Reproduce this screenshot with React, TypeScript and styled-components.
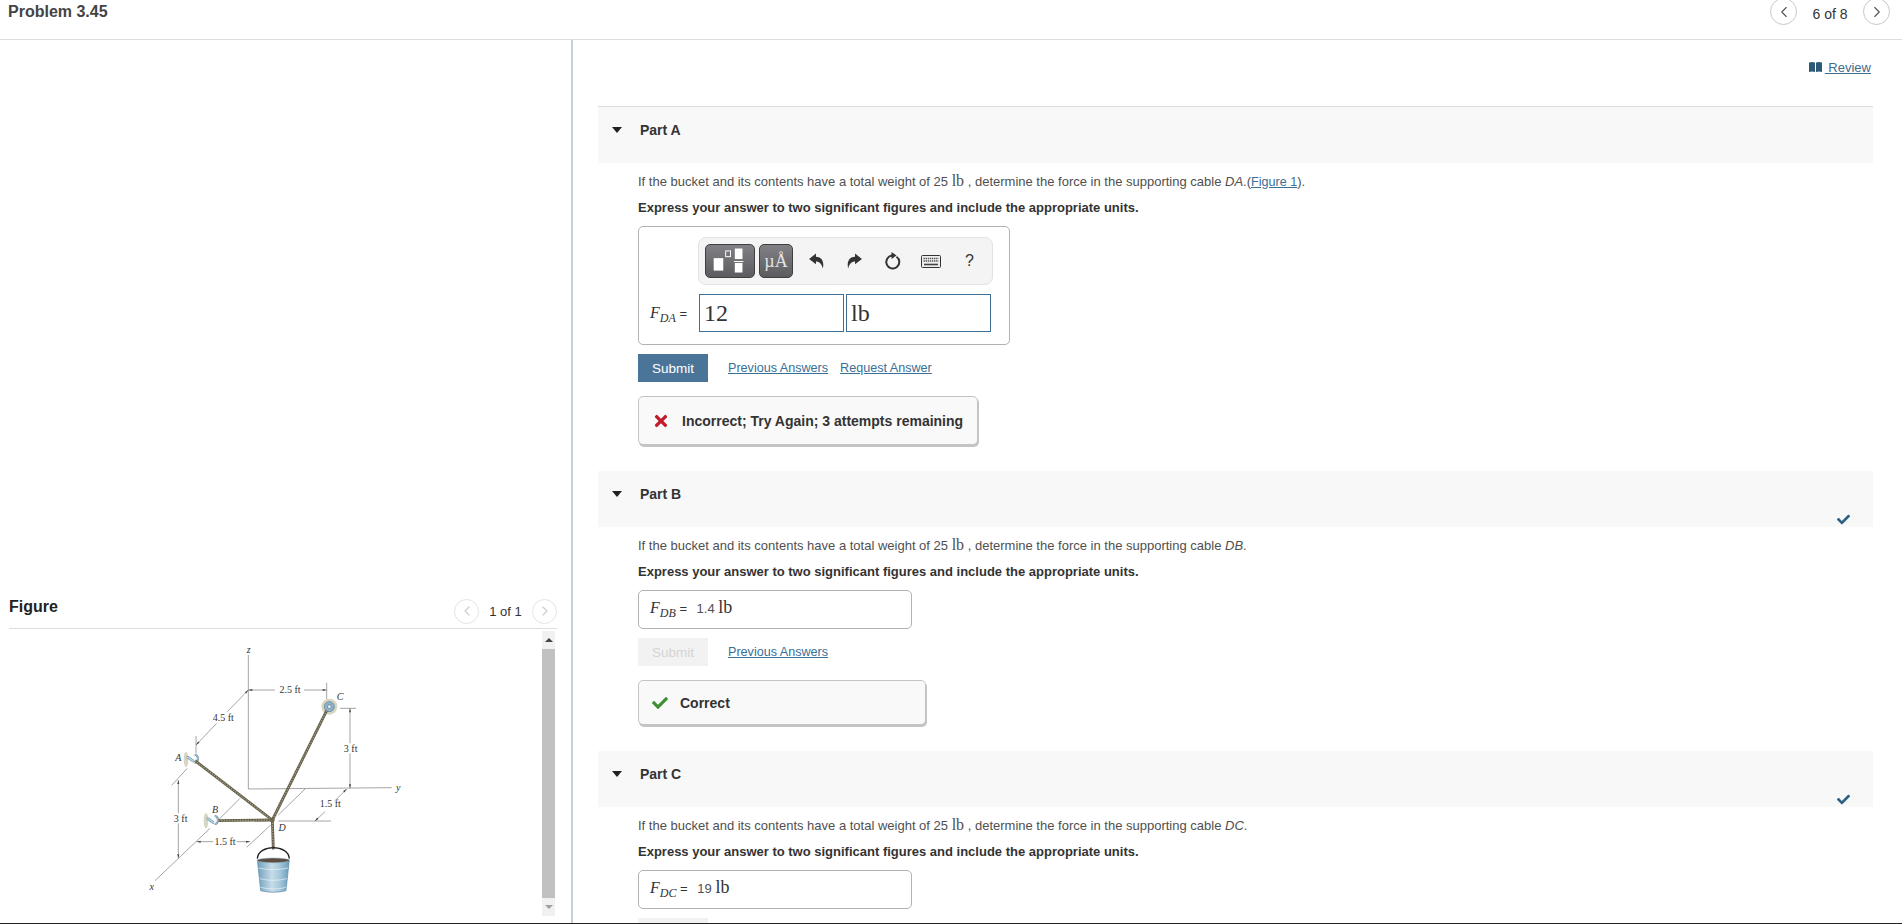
import { ChevronLeft, ChevronRight } from 'lucide-react'
import { FaCheck, FaTimes } from 'react-icons/fa'
import styled, { createGlobalStyle } from 'styled-components'

const GlobalStyle = createGlobalStyle`
  html, body {
    margin: 0;
    padding: 0;
    background: #fff;
    overflow: hidden;
  }
  * {
    box-sizing: border-box;
  }
  body {
    font-family: "Liberation Sans", Arial, sans-serif;
    color: #333;
  }
`

const Rope = ({ d }: { d: string }) => (
  <g fill='none'>
    <path d={d} stroke='#645f4a' strokeWidth='8.5' />
    <path d={d} stroke='#aaa38a' strokeWidth='3.5' strokeDasharray='4 4' />
  </g>
)

const dimLines = [
  'M295 45V447',
  'M295 447L725 443',
  'M15 722L180 565M205 540L270 475',
  'M295 150H375M462 150H530',
  'M530 128V178',
  'M295 150L232 215M200 250L138 315',
  'M138 288V340',
  'M570 205H618',
  'M600 205V310M600 340V445',
  'M590 447L555 482M525 515L495 543',
  'M385 543H543',
  'M465 447L385 525',
  'M65 436L112 385',
  'M85 420V520M85 550V655',
  'M140 605H190M260 605H300',
  'M290 622L362 555'
]

const arrows = [
  [295, 150, 0],
  [530, 150, 180],
  [295, 150, 134],
  [138, 315, -46],
  [600, 205, 90],
  [600, 445, -90],
  [590, 447, 135],
  [495, 543, -45],
  [85, 420, 90],
  [85, 655, -90],
  [140, 605, 0],
  [300, 605, 180]
]

const figureLabels = [
  { x: 296, y: 38, text: 'z', italic: true },
  { x: 745, y: 452, text: 'y', italic: true },
  { x: 5, y: 750, text: 'x', italic: true },
  { x: 420, y: 160, text: '2.5 ft' },
  { x: 220, y: 242, text: '4.5 ft' },
  { x: 602, y: 335, text: '3 ft' },
  { x: 541, y: 502, text: '1.5 ft' },
  { x: 92, y: 545, text: '3 ft' },
  { x: 225, y: 614, text: '1.5 ft' },
  { x: 85, y: 362, text: 'A', italic: true },
  { x: 195, y: 518, text: 'B', italic: true },
  { x: 570, y: 180, text: 'C', italic: true },
  { x: 396, y: 573, text: 'D', italic: true }
]

const Hook = ({ x, y }: { x: number; y: number }) => {
  const arm = `M${x + 2} ${y - 6}C${x + 14} ${y - 6} ${x + 14} ${y + 4} ${x + 24} ${y + 6}`
  const loop = `M${x + 26} ${y - 14}C${x + 40} ${y - 12} ${x + 38} ${y + 10} ${x + 26} ${y + 10}`
  return (
    <g fill='none'>
      <ellipse cx={x} cy={y} rx='7' ry='23' fill='#d8d5c2' />
      <path d={arm} stroke='#5f8aa5' strokeWidth='8' />
      <path d={arm} stroke='#b4d0df' strokeWidth='5' />
      <path d={loop} stroke='#5f8aa5' strokeWidth='6' />
      <path d={loop} stroke='#b4d0df' strokeWidth='3' />
    </g>
  )
}

const BucketFigure = () => (
  <FigureSvg viewBox='0 0 840 795'>
    <defs>
      <linearGradient id='bucketBody' x1='0' x2='1' y1='0' y2='0'>
        <stop offset='0' stopColor='#6f9fbc' />
        <stop offset='0.45' stopColor='#c6dce8' />
        <stop offset='0.7' stopColor='#a6c8da' />
        <stop offset='1' stopColor='#6a9cba' />
      </linearGradient>
    </defs>
    <g fill='none' stroke='#777' strokeWidth='2'>
      {dimLines.map((d) => (
        <path d={d} key={d} />
      ))}
    </g>
    {arrows.map(([x, y, angle]) => (
      <path
        d='M0 0L12 -3V3Z'
        fill='#444'
        transform={`translate(${x} ${y}) rotate(${angle})`}
        key={`${x}-${y}-${angle}`}
      />
    ))}
    <circle cx='538' cy='200' r='24' fill='#d8d5c2' />
    <circle cx='538' cy='200' r='15' fill='#8fb4cc' stroke='#4d7690' strokeWidth='2' />
    <circle cx='538' cy='200' r='6' fill='#dfe9ef' stroke='#4d7690' strokeWidth='2' />
    <Hook x={108} y={358} />
    <Hook x={168} y={542} />
    <Rope d='M135 362L367 540' />
    <Rope d='M530 212L367 540' />
    <Rope d='M205 542L367 540' />
    <Rope d='M367 540L370 628' />
    <circle cx='367' cy='540' r='7' fill='#6b654e' />
    <path d='M322 656C325 612 415 612 418 656' fill='none' stroke='#222' strokeWidth='4' />
    <path d='M322 660L332 752Q370 762 408 752L418 660Z' fill='url(#bucketBody)' stroke='#5f8aa5' strokeWidth='2' />
    <path d='M326 684Q370 694 414 684M329 716Q370 726 411 716M331 742Q370 752 409 742' fill='none' stroke='#eaf3f7' strokeWidth='2' />
    <ellipse cx='370' cy='661' rx='48' ry='7' fill='#5c4d40' stroke='#8fb0c4' strokeWidth='1.5' />
    {figureLabels.map((label) => (
      <FigureLabel x={label.x} y={label.y} $italic={label.italic} key={label.text + label.x}>
        {label.text}
      </FigureLabel>
    ))}
  </FigureSvg>
)

const TemplateIcon = () => (
  <svg width='50' height='34' viewBox='0 0 50 34'>
    <rect x='8' y='14' width='10' height='13' fill='#fff' />
    <rect x='20.5' y='6.5' width='5' height='6' fill='none' stroke='#fff' />
    <rect x='30' y='4' width='8' height='11' fill='#fff' />
    <rect x='29' y='17' width='10' height='1' fill='#fff' />
    <rect x='30' y='19' width='8' height='10' fill='#fff' />
  </svg>
)

const ArrowIcon = ({ flip }: { flip?: boolean }) => (
  <svg width='17' height='18' viewBox='0 0 16 16'>
    <path
      d='M1 6L7.5 1V4C12.5 4 15.5 8 14 15C13 11 10.5 8.5 7.5 8.5V11Z'
      fill='#333'
      transform={flip ? 'matrix(-1 0 0 1 16 0)' : undefined}
    />
  </svg>
)

const ResetIcon = () => (
  <svg width='18' height='20' viewBox='0 0 18 20'>
    <path d='M12.5 5.7A6.5 6.5 0 1 1 8 4.6' fill='none' stroke='#333' strokeWidth='2' />
    <path d='M7.5 1L12.5 4.5L7.5 8Z' fill='#333' />
  </svg>
)

const KeyboardIcon = () => (
  <svg width='20' height='13' viewBox='0 0 20 13'>
    <rect x='0.5' y='0.5' width='19' height='12' rx='1' fill='#eee' stroke='#333' />
    <path d='M2.5 3.5H17.5M2.5 6H17.5' stroke='#555' strokeWidth='1.4' strokeDasharray='1.4 0.7' />
    <path d='M3 9.5H17' stroke='#444' strokeWidth='1.6' />
  </svg>
)

const BookIcon = () => (
  <svg width='13' height='10' viewBox='0 0 13 10'>
    <path d='M0 0.5Q3 -0.3 6 0.5V10Q3 9.2 0 10ZM7 0.5Q10 -0.3 13 0.5V10Q10 9.2 7 10Z' fill='#2d5876' />
  </svg>
)

const Symbol = ({ letter, sub }: { letter: string; sub: string }) => (
  <MathSymbol>
    {letter}
    <sub>{sub}</sub>
  </MathSymbol>
)

type PartProps = {
  name: string
  cable: string
  first?: boolean
  done?: boolean
  link?: boolean
  children: React.ReactNode
}

const Part = ({ name, cable, first, done, link, children }: PartProps) => (
  <PartWrapper>
    <PartHeader $first={first}>
      <PartTitle>
        <Caret />
        {name}
      </PartTitle>
      {done && (
        <DoneMark>
          <FaCheck size={13} />
        </DoneMark>
      )}
    </PartHeader>
    <PartBody>
      <Prompt>
        If the bucket and its contents have a total weight of 25 <Unit>lb</Unit> , determine the force in the
        supporting cable <em>{cable}</em>.
        {link && (
          <>
            (<TextLink>Figure 1</TextLink>).
          </>
        )}
      </Prompt>
      <Instruction>Express your answer to two significant figures and include the appropriate units.</Instruction>
      {children}
    </PartBody>
  </PartWrapper>
)

const App = () => {
  return (
    <Page>
      <GlobalStyle />
      <TopBar>
        <ProblemTitle>Problem 3.45</ProblemTitle>
        <Pager>
          <RoundButton $size={27}>
            <ChevronLeft size={18} strokeWidth={1.5} />
          </RoundButton>
          <PagerText>6 of 8</PagerText>
          <RoundButton $size={27}>
            <ChevronRight size={18} strokeWidth={1.5} />
          </RoundButton>
        </Pager>
      </TopBar>
      <Columns>
        <LeftPane>
          <FigureHeader>
            <FigureTitle>Figure</FigureTitle>
            <FigurePager>
              <RoundButton $size={25} $faded>
                <ChevronLeft size={16} strokeWidth={2} />
              </RoundButton>
              <FigureCount>1 of 1</FigureCount>
              <RoundButton $size={25} $faded>
                <ChevronRight size={16} strokeWidth={2} />
              </RoundButton>
            </FigurePager>
          </FigureHeader>
          <FigureBody>
            <BucketFigure />
            <ScrollBar>
              <ScrollArrow $up />
              <ScrollThumb />
              <ScrollArrow />
            </ScrollBar>
          </FigureBody>
        </LeftPane>
        <RightPane>
          <ReviewRow>
            <BookIcon />
            <ReviewLink> Review</ReviewLink>
          </ReviewRow>
          <Part name='Part A' cable='DA' first link>
            <AnswerBox>
              <Toolbar>
                <ToolButton $wide>
                  <TemplateIcon />
                </ToolButton>
                <ToolButton>
                  <UnitGlyph>µÅ</UnitGlyph>
                </ToolButton>
                <ToolIcon>
                  <ArrowIcon />
                </ToolIcon>
                <ToolIcon>
                  <ArrowIcon flip />
                </ToolIcon>
                <ToolIcon>
                  <ResetIcon />
                </ToolIcon>
                <ToolIcon>
                  <KeyboardIcon />
                </ToolIcon>
                <ToolIcon>
                  <HelpGlyph>?</HelpGlyph>
                </ToolIcon>
              </Toolbar>
              <AnswerRow>
                <AnswerLabel>
                  <Symbol letter='F' sub='DA' /> =
                </AnswerLabel>
                <AnswerInput defaultValue='12' readOnly />
                <AnswerInput defaultValue='lb' readOnly />
              </AnswerRow>
            </AnswerBox>
            <Actions>
              <SubmitButton>Submit</SubmitButton>
              <TextLink>Previous Answers</TextLink>
              <TextLink>Request Answer</TextLink>
            </Actions>
            <Feedback $width={340} $height={49}>
              <ErrorMark>
                <FaTimes size={18} />
              </ErrorMark>
              Incorrect; Try Again; 3 attempts remaining
            </Feedback>
          </Part>
          <Part name='Part B' cable='DB' done>
            <AnsweredBox>
              <Symbol letter='F' sub='DB' /> = <Value>1.4</Value> <AnsweredUnit>lb</AnsweredUnit>
            </AnsweredBox>
            <Actions>
              <SubmitButton $disabled>Submit</SubmitButton>
              <TextLink>Previous Answers</TextLink>
            </Actions>
            <Feedback $width={288} $height={45}>
              <CorrectMark>
                <FaCheck size={16} />
              </CorrectMark>
              Correct
            </Feedback>
          </Part>
          <Part name='Part C' cable='DC' done>
            <AnsweredBox>
              <Symbol letter='F' sub='DC' /> = <Value>19</Value> <AnsweredUnit>lb</AnsweredUnit>
            </AnsweredBox>
            <Actions>
              <SubmitButton $disabled>Submit</SubmitButton>
            </Actions>
          </Part>
        </RightPane>
      </Columns>
    </Page>
  )
}

export default App

const Page = styled.div`
  width: 1902px;
  height: 924px;
  display: flex;
  flex-direction: column;
  overflow: hidden;
  border-bottom: 1px solid #222;
`

const TopBar = styled.header`
  flex: 0 0 40px;
  display: flex;
  justify-content: space-between;
  padding: 0 12px 0 8px;
  border-bottom: 1px solid #ddd;
`

const ProblemTitle = styled.h1`
  margin: 3px 0 0;
  font-size: 16px;
  line-height: 18px;
  font-weight: 700;
  color: #444;
`

const Pager = styled.div`
  display: flex;
  align-items: flex-start;
  gap: 10px;
  margin-top: -2px;
`

const PagerText = styled.span`
  font-size: 14px;
  line-height: 32px;
  width: 46px;
  text-align: center;
`

const RoundButton = styled.span<{ $size: number; $faded?: boolean }>`
  width: ${(p) => p.$size}px;
  height: ${(p) => p.$size}px;
  flex: none;
  display: flex;
  align-items: center;
  justify-content: center;
  border-radius: 50%;
  border: 1px solid ${(p) => (p.$faded ? '#e4e4e4' : '#c8c8c8')};
  color: ${(p) => (p.$faded ? '#d0d0d0' : '#555')};
`

const Columns = styled.main`
  flex: 1;
  min-height: 0;
  display: flex;
`

const LeftPane = styled.aside`
  flex: 0 0 573px;
  display: flex;
  flex-direction: column;
  justify-content: flex-end;
  padding: 0 14px 7px 9px;
  border-right: 2px solid #c6d0d8;
`

const FigureHeader = styled.div`
  display: flex;
  justify-content: space-between;
  align-items: center;
  height: 38px;
  padding-bottom: 6px;
  border-bottom: 1px solid #ddd;
`

const FigureTitle = styled.h2`
  margin: 0;
  font-size: 16px;
  font-weight: 700;
  color: #222;
`

const FigurePager = styled.div`
  display: flex;
  align-items: center;
  gap: 10px;
  margin-top: 9px;
`

const FigureCount = styled.span`
  width: 33px;
  font-size: 13px;
  text-align: center;
  white-space: nowrap;
`

const FigureBody = styled.div`
  height: 287px;
  display: flex;
  justify-content: space-between;
  padding: 2px 2px 0 0;
`

const FigureSvg = styled.svg`
  width: 280px;
  height: 265px;
  margin: 9px 0 0 141px;
  overflow: visible;
`

const FigureLabel = styled.text<{ $italic?: boolean }>`
  font-family: "Liberation Serif", serif;
  font-size: 30px;
  font-style: ${(p) => (p.$italic ? 'italic' : 'normal')};
  text-anchor: middle;
  fill: #333;
`

const ScrollBar = styled.div`
  width: 13px;
  display: flex;
  flex-direction: column;
  background: #f1f1f1;
`

const ScrollArrow = styled.div<{ $up?: boolean }>`
  flex: 0 0 18px;
  display: flex;
  align-items: center;
  justify-content: center;
  &::before {
    content: '';
    border-left: 4px solid transparent;
    border-right: 4px solid transparent;
    ${(p) => (p.$up ? 'border-bottom: 4px solid #444;' : 'border-top: 4px solid #a0a0a0;')}
  }
`

const ScrollThumb = styled.div`
  flex: 1;
  background: #c1c1c1;
`

const RightPane = styled.section`
  flex: 1;
  min-width: 0;
  padding: 0 29px 0 25px;
  overflow: hidden;
`

const ReviewRow = styled.div`
  height: 66px;
  display: flex;
  justify-content: flex-end;
  align-items: flex-start;
  gap: 3px;
  padding: 21px 2px 0 0;
  svg {
    margin-top: 1px;
  }
`

const ReviewLink = styled.a`
  font-size: 13px;
  line-height: 14px;
  color: #3f6b8c;
  text-decoration: underline;
  white-space: pre;
`

const PartWrapper = styled.article`
  margin-bottom: 26px;
`

const PartHeader = styled.div<{ $first?: boolean }>`
  height: ${(p) => (p.$first ? 57 : 56)}px;
  display: flex;
  justify-content: space-between;
  padding: 0 23px 0 14px;
  background: #f8f8f8;
  border-top: ${(p) => (p.$first ? '1px solid #ddd' : 'none')};
`

const PartTitle = styled.h3`
  margin: 15px 0 0;
  display: flex;
  align-items: center;
  height: 16px;
  gap: 18px;
  font-size: 14px;
  font-weight: 700;
  color: #333;
`

const Caret = styled.span`
  width: 0;
  height: 0;
  border-left: 5.5px solid transparent;
  border-right: 5.5px solid transparent;
  border-top: 6px solid #222;
`

const DoneMark = styled.span`
  display: flex;
  align-self: flex-end;
  margin-bottom: 1px;
  color: #2d5f82;
`

const PartBody = styled.div`
  padding-left: 40px;
`

const Prompt = styled.p`
  margin: 9px 0 0;
  font-size: 13px;
  line-height: 20px;
  color: #505050;
  em {
    font-style: italic;
  }
`

const Instruction = styled.p`
  margin: 6px 0 0;
  font-size: 13px;
  line-height: 20px;
  font-weight: 700;
  color: #333;
`

const Unit = styled.span`
  font-family: "Liberation Serif", serif;
  font-size: 16px;
  line-height: 0;
`

const AnsweredUnit = styled.span`
  font-family: "Liberation Serif", serif;
  font-size: 18px;
  line-height: 0;
`

const Value = styled.span`
  margin-left: 6px;
  font-size: 13px;
  color: #505050;
`

const TextLink = styled.a`
  font-size: 12.6px;
  color: #3a6f98;
  text-decoration: underline;
`

const AnswerBox = styled.div`
  width: 372px;
  height: 119px;
  margin-top: 8px;
  padding: 10px 18px 0 11px;
  border: 1px solid #b2b2b2;
  border-radius: 5px;
`

const Toolbar = styled.div`
  width: 295px;
  height: 48px;
  margin-left: 48px;
  display: flex;
  align-items: center;
  padding-left: 6px;
  gap: 4px;
  background: #f4f4f4;
  border: 1px solid #e2e2e2;
  border-radius: 8px;
`

const ToolButton = styled.span<{ $wide?: boolean }>`
  width: ${(p) => (p.$wide ? 50 : 34)}px;
  height: 34px;
  display: flex;
  align-items: center;
  justify-content: center;
  border-radius: 5px;
  border: 1px solid #3f3f3f;
  background: linear-gradient(#808085, #5c5c60);
`

const UnitGlyph = styled.span`
  font-family: "Liberation Serif", serif;
  font-size: 18px;
  color: #e4e4e4;
`

const ToolIcon = styled.span`
  width: 38.3px;
  margin-right: -4px;
  display: flex;
  align-items: center;
  justify-content: center;
  color: #333;
`

const HelpGlyph = styled.span`
  font-size: 16px;
`

const AnswerRow = styled.div`
  display: flex;
  align-items: center;
  margin-top: 9px;
  gap: 2px;
`

const AnswerLabel = styled.span`
  width: 49px;
  font-size: 13px;
  white-space: nowrap;
`

const MathSymbol = styled.span`
  font-family: "Liberation Serif", serif;
  font-style: italic;
  font-size: 16px;
  sub {
    font-size: 12px;
    line-height: 0;
  }
`

const AnswerInput = styled.input`
  width: 145px;
  height: 38px;
  padding: 0 0 0 4px;
  border: 1px solid #3f7096;
  border-radius: 0;
  outline: none;
  font-family: "Liberation Serif", serif;
  font-size: 24px;
  color: #333;
`

const Actions = styled.div`
  margin-top: 9px;
  display: flex;
  align-items: center;
  gap: 12px;
`

const SubmitButton = styled.span<{ $disabled?: boolean }>`
  width: 70px;
  height: 28px;
  margin-right: 8px;
  display: flex;
  align-items: center;
  justify-content: center;
  font-size: 13.5px;
  color: ${(p) => (p.$disabled ? '#d4d4d4' : '#fff')};
  background: ${(p) => (p.$disabled ? '#f2f2f2' : '#4a7599')};
`

const Feedback = styled.div<{ $width: number; $height: number }>`
  width: ${(p) => p.$width}px;
  height: ${(p) => p.$height}px;
  margin-top: 14px;
  display: flex;
  align-items: center;
  padding-left: 13px;
  gap: 12px;
  font-size: 14px;
  font-weight: 700;
  color: #333;
  background: #f9f9f9;
  border: 1px solid #c4c4c4;
  border-radius: 5px;
  box-shadow: 1px 2px 0 #c4c4c4;
`

const ErrorMark = styled.span`
  display: flex;
  color: #c11b2c;
`

const CorrectMark = styled.span`
  display: flex;
  color: #3f8f34;
`

const AnsweredBox = styled.div`
  width: 274px;
  height: 39px;
  margin-top: 8px;
  padding: 8px 0 0 11px;
  border: 1px solid #b2b2b2;
  border-radius: 5px;
  font-size: 13px;
  white-space: pre-wrap;
`
